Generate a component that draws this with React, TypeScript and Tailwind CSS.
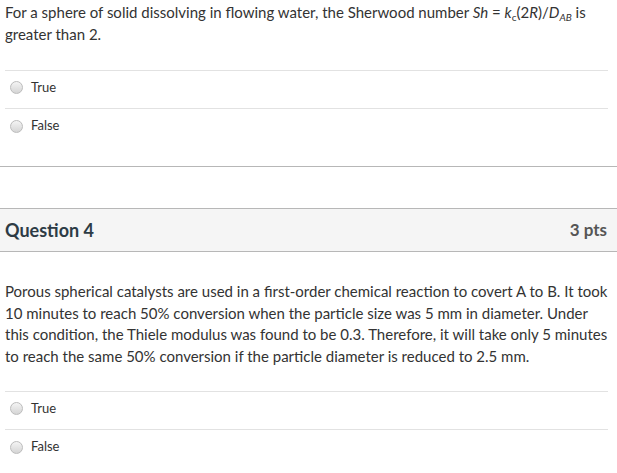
const font = { fontFamily: "Lato, 'Liberation Sans', sans-serif" };

function Radio() {
  return (
    <span className="inline-block h-[13px] w-[13px] shrink-0 rounded-full border border-[#bcbcbc] bg-linear-to-b from-[#f4f4f4] to-[#d5d5d5]" />
  );
}

function Option({ label, divider }: { label: string; divider?: boolean }) {
  return (
    <div
      className={
        "flex h-[38px] items-center gap-[8px] pl-[5px] pb-[4px] " +
        (divider ? "border-b border-[#e2e2e2]" : "")
      }
    >
      <Radio />
      <span className="text-[13px] text-[#333]">{label}</span>
    </div>
  );
}

export default function App() {
  return (
    <main className="min-h-screen bg-white text-[#333]" style={font}>
      <div className="border-b border-[#b7b7b7]">
        <p className="px-[5px] pt-[1px] text-[15px] leading-[22px]">
          For a sphere of solid dissolving in flowing water, the Sherwood number{" "}
          <i>Sh</i> = <i>k</i>
          <sub className="text-[10px]">c</sub>(2<i>R</i>)/<i>D</i>
          <sub className="text-[10px]">
            <i>AB</i>
          </sub>{" "}
          is
          <br />
          greater than 2.
        </p>
        <div className="ml-[5px] mr-[9px] mt-[25px] border-t border-[#e2e2e2]">
          <Option label="True" divider />
          <Option label="False" />
        </div>
        <div className="h-[19px]" />
      </div>

      <div className="h-[41px]" />

      <div className="flex h-[44px] items-center justify-between border-y border-[#b7b7b7] bg-[#f5f5f5] pl-[5px] pr-[10px]">
        <h2 className="text-[18px] font-bold text-[#2d3b45]">Question 4</h2>
        <span className="text-[17px] font-bold text-[#555]">3 pts</span>
      </div>

      <p className="pl-[5px] pr-[4px] pt-[29px] text-[15px] leading-[21.5px] whitespace-nowrap">
        Porous spherical catalysts are used in a first-order chemical reaction to covert A to B. It took
        <br />
        10 minutes to reach 50% conversion when the particle size was 5 mm in diameter. Under
        <br />
        this condition, the Thiele modulus was found to be 0.3. Therefore, it will take only 5 minutes
        <br />
        to reach the same 50% conversion if the particle diameter is reduced to 2.5 mm.
      </p>
      <div className="ml-[5px] mr-[9px] mt-[24px] border-t border-[#e2e2e2]">
        <Option label="True" divider />
        <Option label="False" />
      </div>
    </main>
  );
}
